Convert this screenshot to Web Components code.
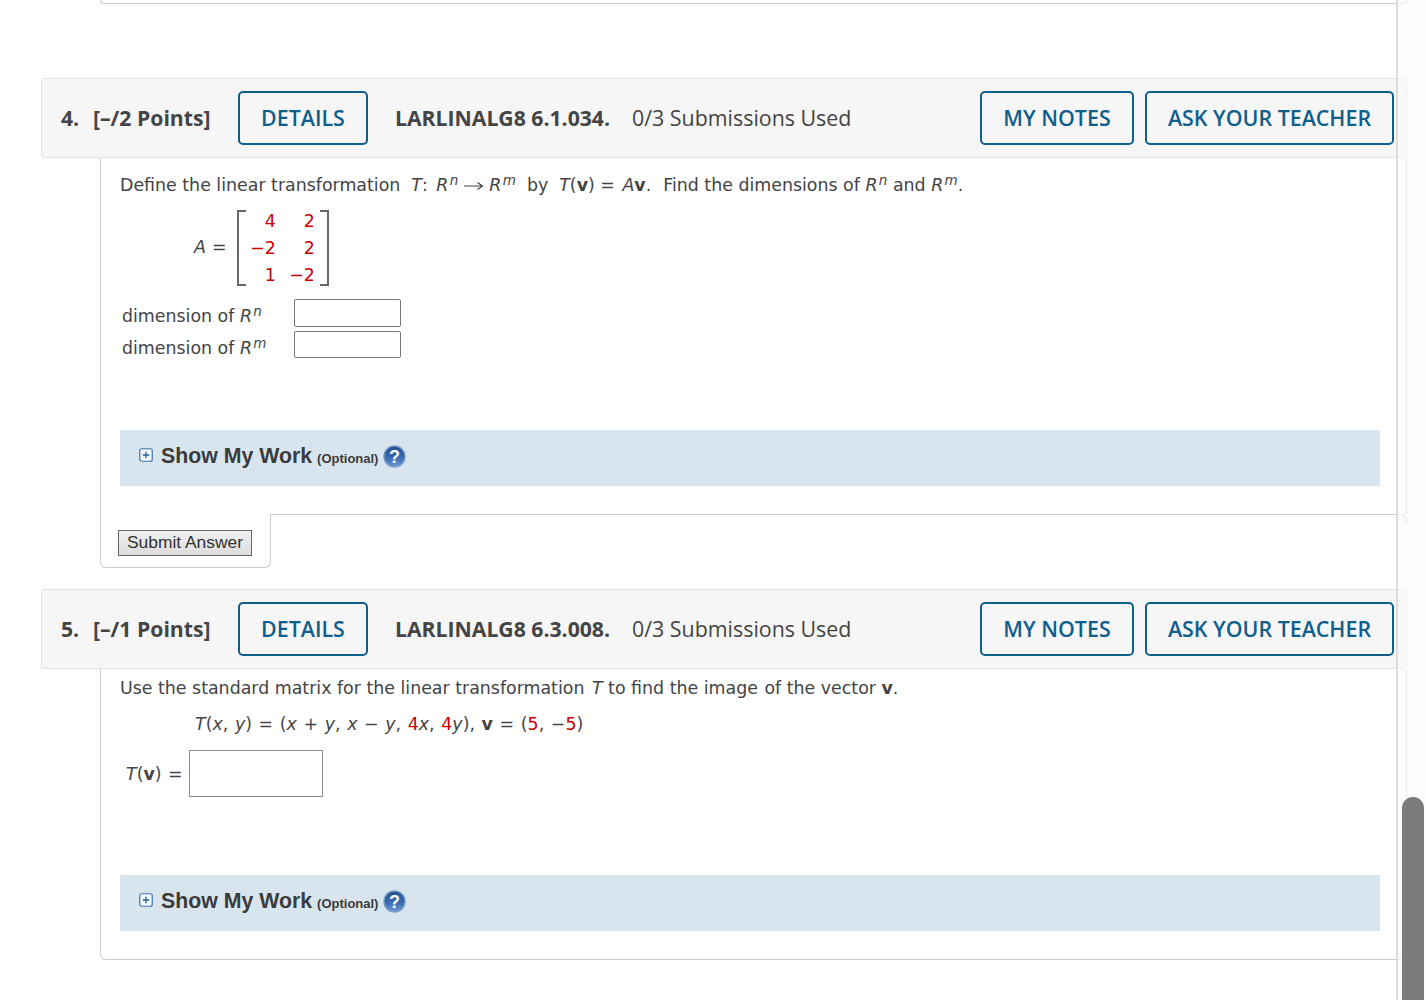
<!DOCTYPE html>
<html lang="en">
<head>
<meta charset="utf-8">
<title>Questions</title>
<style>
	html, body { margin: 0; padding: 0; height: 1000px; overflow: hidden; background: #fff; }
</style>
</head>
<body>
<wa-page>
	<wa-question num="4." points="[–/2 Points]" code="LARLINALG8 6.1.034." used="0/3 Submissions Used" submit>
		<wa-line top="14">Define the linear transformation<wa-gap w="11"></wa-gap><i>T</i>:<wa-gap w="3"></wa-gap> <i>R</i><m-sup>n</m-sup> <wa-arrow></wa-arrow> <i>R</i><m-sup>m</m-sup><wa-gap w="11"></wa-gap>by<wa-gap w="11"></wa-gap><i>T</i>(<b>v</b>) = <wa-gap w="2"></wa-gap><i>A</i><b>v</b>.<wa-gap w="12"></wa-gap>Find the dimensions of <i>R</i><m-sup>n</m-sup> and <i>R</i><m-sup>m</m-sup>.</wa-line>
		<wa-matrix values="4,2,−2,2,1,−2"></wa-matrix>
		<wa-dim-row top="13">dimension of <i>R</i><m-sup>n</m-sup></wa-dim-row>
		<wa-dim-row top="4" short>dimension of <i>R</i><m-sup>m</m-sup></wa-dim-row>
		<wa-work top="72"></wa-work>
	</wa-question>
	<wa-question num="5." points="[–/1 Points]" code="LARLINALG8 6.3.008." used="0/3 Submissions Used" gap="21">
		<wa-line top="6">Use the standard matrix for the linear transformation <wa-gap w="2"></wa-gap><i>T</i> to find the image <wa-gap w="1"></wa-gap>of the vector <b>v</b>.</wa-line>
		<wa-line top="10" left="75" spread="1.1"><i>T</i>(<i>x</i>, <i>y</i>) = (<i>x</i> + <i>y</i>, <i>x</i> − <i>y</i>, <m-red>4</m-red><i>x</i>, <m-red>4</m-red><i>y</i>), <b>v</b> = (<m-red>5</m-red>, −<m-red>5</m-red>)</wa-line>
		<wa-answer-row><i>T</i>(<b>v</b>) =</wa-answer-row>
		<wa-work top="78"></wa-work>
	</wa-question>
</wa-page>

<script>
const BODY_FONT = '"DejaVu Sans", Verdana, sans-serif';

// whole scrolled page, with the scrollbar lying over it
class WaPage extends HTMLElement {
	constructor() {
		super();
		this.attachShadow({ mode: 'open' }).innerHTML = `
			<style>
				:host { display: block; position: relative; height: 1000px; overflow: hidden; padding-left: 41px;
					box-sizing: border-box; color: #444; font: 17.4px/26px ${BODY_FONT}; }
				.prev { height: 3px; width: 1306px; margin-left: 59px; border: 1px solid #ccc; border-top: 0;
					border-radius: 0 0 6px 6px; margin-bottom: 74px; box-sizing: content-box; }
				.content { width: 1366px; }
				.track { position: absolute; top: 0; right: 0; bottom: 0; width: 28px; background: rgba(251,251,251,.6);
					border-left: 2px solid #dcdcdc; }
				.thumb { position: absolute; top: 797px; bottom: -20px; left: 4px; width: 22px; border-radius: 11px; background: #7b7b7b; }
			</style>
			<div class="content"><div class="prev"></div><slot></slot></div>
			<div class="track"><div class="thumb"></div></div>
		`;
	}
}

// grey header bar and indented question body
class WaQuestion extends HTMLElement {
	connectedCallback() {
		const a = n => this.getAttribute(n) || '';
		this.attachShadow({ mode: 'open' }).innerHTML = `
			<style>
				:host { display: block; margin-top: ${a('gap') || 0}px; }
				* { box-sizing: border-box; }
				.hdr { display: flex; align-items: center; height: 80px; padding: 0 12px 0 19px; background: #f6f6f7;
					border: 1px solid #e2e2e2; border-radius: 3px; font: 600 21.4px "Open Sans", sans-serif; color: #444; }
				.hdr span { padding-bottom: 2px; }
				.num { font-weight: 700; width: 32px; font-size: 21.2px; }
				.pts { font-weight: 700; width: 145px; font-size: 21.2px; }
				.code { font-weight: 700; margin-left: 27px; width: 237px; font-size: 21.2px; }
				.used { font-weight: 400; flex: 1; }
				.hdr .btn { display: flex; align-items: center; justify-content: center; height: 54px; border: 2px solid #0f5f8c;
					border-radius: 5px; color: #0f5f8c; }
				.details { width: 130px; }
				.notes { width: 154px; margin-right: 11px; }
				.ask { width: 249px; }
				.body { display: flow-root; margin-left: 59px; padding: 0 26px 28px 19px; border-left: 1px solid #ccc; border-right: 1px solid #ccc; }
				.body.last { padding-bottom: 28px; border-bottom: 1px solid #ccc; border-radius: 0 0 6px 6px; }
				.foot { display: flex; margin-left: 59px; height: 54px; }
				.tab { width: 171px; padding: 16px 0 0 17px; border: 1px solid #ccc; border-top: 0; border-radius: 0 0 6px 6px; }
				.rest { flex: 1; border-top: 1px solid #ccc; border-right: 1px solid #ccc; height: 10px; border-radius: 0 6px 0 0; }
				button { display: block; width: 134px; height: 26px; padding: 0 0 2px; border: 1px solid #666; background: linear-gradient(#f2f2f2, #dcdcdc);
					font: 17.4px "Liberation Sans", Arial, sans-serif; color: #333; }
			</style>
			<div class="hdr">
				<span class="num">${a('num')}</span><span class="pts">${a('points')}</span>
				<span class="btn details">DETAILS</span>
				<span class="code">${a('code')}</span><span class="used">${a('used')}</span>
				<span class="btn notes">MY NOTES</span><span class="btn ask">ASK YOUR TEACHER</span>
			</div>
			<div class="body ${this.hasAttribute('submit') ? '' : 'last'}"><slot></slot></div>
			${this.hasAttribute('submit') ? '<div class="foot"><div class="tab"><button>Submit Answer</button></div><div class="rest"></div></div>' : ''}
		`;
	}
}

class WaLine extends HTMLElement {
	connectedCallback() {
		const a = (n, d) => this.getAttribute(n) || d;
		this.attachShadow({ mode: 'open' }).innerHTML = `
			<style>:host { display: block; white-space: nowrap; margin-top: ${a('top', 0)}px; margin-left: ${a('left', 0)}px; word-spacing: ${a('spread', 0)}px; }</style>
			<slot></slot>`;
	}
}

class WaGap extends HTMLElement {
	connectedCallback() {
		this.attachShadow({ mode: 'open' }).innerHTML = `<style>:host { display: inline-block; width: ${this.getAttribute('w')}px; }</style>`;
	}
}

class MSup extends HTMLElement {
	constructor() {
		super();
		this.attachShadow({ mode: 'open' }).innerHTML = `
			<style>:host { font-size: 13.5px; font-style: italic; line-height: 0; vertical-align: 6px; margin-left: -3px; }</style><slot></slot>`;
	}
}

class MRed extends HTMLElement {
	constructor() {
		super();
		this.attachShadow({ mode: 'open' }).innerHTML = `<style>:host { color: #c80000; }</style><slot></slot>`;
	}
}

class WaArrow extends HTMLElement {
	constructor() {
		super();
		this.attachShadow({ mode: 'open' }).innerHTML = `
			<style>:host { display: inline-block; width: 20px; height: 10px; }
			svg { display: block; }</style>
			<svg width="20" height="10" viewBox="0 0 20 10"><path d="M0 5H18M13.5 1.5L18.5 5L13.5 8.5" fill="none" stroke="#444" stroke-width="1.2"/></svg>`;
	}
}

// A = [ matrix ] with red entries
class WaMatrix extends HTMLElement {
	connectedCallback() {
		const cells = this.getAttribute('values').split(',').map(v => `<span>${v}</span>`).join('');
		this.attachShadow({ mode: 'open' }).innerHTML = `
			<style>
				:host { display: flex; align-items: center; height: 76px; margin: 12px 0 0 74px; }
				.a { font-style: italic; margin-top: -2px; }
				.eq { margin-left: 6px; width: 25px; margin-top: -2px; }
				.m { position: relative; width: 92px; height: 76px; box-sizing: border-box; padding: 1px 0 0 0;
					border-left: 2px solid #666; border-right: 2px solid #666; display: grid;
					grid-template-columns: 37px 39px; grid-auto-rows: 27px; justify-content: start; align-content: center;
					text-align: right; color: #c80000; }
				.m::before, .m::after { content: ""; position: absolute; top: 0; width: 7px; height: 72px;
					border-top: 2px solid #666; border-bottom: 2px solid #666; }
				.m::before { left: 0; } .m::after { right: 0; }
			</style>
			<span class="a">A</span><span class="eq">=</span>
			<div class="m">${cells}</div>`;
	}
}

// "dimension of R^n" label with its small answer box
class WaDimRow extends HTMLElement {
	connectedCallback() {
		const h = this.hasAttribute('short') ? 27 : 28;
		this.attachShadow({ mode: 'open' }).innerHTML = `
			<style>
				:host { display: flex; align-items: center; margin: ${this.getAttribute('top')}px 0 0 2px; height: ${h}px; }
				.l { width: 172px; white-space: nowrap; padding-top: 6px; }
				input { width: 107px; height: ${h}px; box-sizing: border-box; border: 1px solid #777; border-radius: 2px; background: #fff; padding: 0; margin: 0; }
			</style>
			<div class="l"><slot></slot></div><input type="text" aria-label="answer">`;
	}
}

class WaAnswerRow extends HTMLElement {
	constructor() {
		super();
		this.attachShadow({ mode: 'open' }).innerHTML = `
			<style>
				:host { display: flex; align-items: center; margin: 13px 0 0 6px; height: 47px; word-spacing: 1px; }
				.l { width: 63px; white-space: nowrap; }
				input { width: 134px; height: 47px; box-sizing: border-box; border: 1px solid #888; background: #fff; padding: 0; margin: 0; }
			</style>
			<div class="l"><slot></slot></div><input type="text" aria-label="answer">`;
	}
}

// collapsed "Show My Work" band
class WaWork extends HTMLElement {
	connectedCallback() {
		this.attachShadow({ mode: 'open' }).innerHTML = `
			<style>
				:host { display: flex; align-items: center; height: 56px; box-sizing: border-box; margin-top: ${this.getAttribute('top')}px; padding: 0 0 3px 19px;
					background: #d8e5ef; color: #3b3b3b; font-family: "Liberation Sans", Arial, sans-serif; }
				svg { display: block; flex: none; }
				.plus { margin-top: -4px; }
				.t { font-size: 21.3px; font-weight: 700; margin: -2px 0 0 8px; }
				.o { font-size: 13px; font-weight: 700; margin: 4px 5px 0 5px; }
			</style>
			<svg class="plus" width="14" height="14" viewBox="0 0 14 14"><rect x=".75" y=".75" width="12.5" height="12.5" rx="2" fill="#f1f6fb" stroke="#3f74ad" stroke-width="1.2"/><path d="M7 3.8V10.2M3.8 7H10.2" stroke="#2d5c8f" stroke-width="1.3"/></svg>
			<span class="t">Show My Work</span><span class="o">(Optional)</span>
			<svg width="23" height="23" viewBox="0 0 23 23">
				<defs><linearGradient id="g" x1="0" y1="0" x2="0" y2="1"><stop offset="0" stop-color="#24508f"/><stop offset=".55" stop-color="#3a6cb0"/><stop offset="1" stop-color="#6f9bd6"/></linearGradient></defs>
				<circle cx="11.5" cy="11.5" r="10.6" fill="url(#g)" stroke="#7f9fc9" stroke-width="1.2"/>
				<text x="11.5" y="17.8" text-anchor="middle" font-family="Liberation Sans, Arial, sans-serif" font-weight="700" font-size="18" fill="#fff">?</text>
			</svg>`;
	}
}

customElements.define('wa-page', WaPage);
customElements.define('wa-question', WaQuestion);
customElements.define('wa-line', WaLine);
customElements.define('wa-gap', WaGap);
customElements.define('m-sup', MSup);
customElements.define('m-red', MRed);
customElements.define('wa-arrow', WaArrow);
customElements.define('wa-matrix', WaMatrix);
customElements.define('wa-dim-row', WaDimRow);
customElements.define('wa-answer-row', WaAnswerRow);
customElements.define('wa-work', WaWork);
</script>
</body>
</html>
